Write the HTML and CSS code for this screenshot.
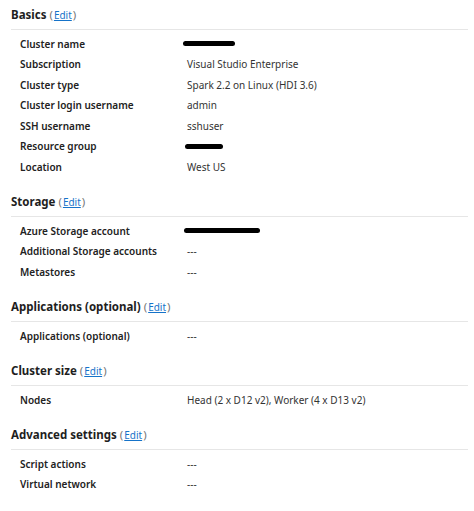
FILE: index.html
```html
<!DOCTYPE html>
<html>
<head>
<meta charset="utf-8">
<link rel="stylesheet" href="styles.css">
</head>
<body>
<div class="page">
  <section class="sec">
    <h2 class="sec-head">Basics <span class="paren">(</span><a class="edit" href="#">Edit</a><span class="paren">)</span></h2>
    <div class="rows">
      <div class="row"><span class="lbl">Cluster name</span><span class="val"><span class="redact r1"></span></span></div>
      <div class="row"><span class="lbl">Subscription</span><span class="val">Visual Studio Enterprise</span></div>
      <div class="row"><span class="lbl">Cluster type</span><span class="val">Spark 2.2 on Linux (HDI 3.6)</span></div>
      <div class="row"><span class="lbl">Cluster login username</span><span class="val">admin</span></div>
      <div class="row"><span class="lbl">SSH username</span><span class="val">sshuser</span></div>
      <div class="row"><span class="lbl">Resource group</span><span class="val"><span class="redact r2"></span></span></div>
      <div class="row"><span class="lbl">Location</span><span class="val">West US</span></div>
    </div>
  </section>
  <section class="sec">
    <h2 class="sec-head">Storage <span class="paren">(</span><a class="edit" href="#">Edit</a><span class="paren">)</span></h2>
    <div class="rows">
      <div class="row"><span class="lbl">Azure Storage account</span><span class="val"><span class="redact r3"></span></span></div>
      <div class="row"><span class="lbl">Additional Storage accounts</span><span class="val">---</span></div>
      <div class="row"><span class="lbl">Metastores</span><span class="val">---</span></div>
    </div>
  </section>
  <section class="sec">
    <h2 class="sec-head">Applications (optional) <span class="paren">(</span><a class="edit" href="#">Edit</a><span class="paren">)</span></h2>
    <div class="rows">
      <div class="row"><span class="lbl">Applications (optional)</span><span class="val">---</span></div>
    </div>
  </section>
  <section class="sec">
    <h2 class="sec-head">Cluster size <span class="paren">(</span><a class="edit" href="#">Edit</a><span class="paren">)</span></h2>
    <div class="rows">
      <div class="row"><span class="lbl">Nodes</span><span class="val">Head (2 x D12 v2), Worker (4 x D13 v2)</span></div>
    </div>
  </section>
  <section class="sec">
    <h2 class="sec-head">Advanced settings <span class="paren">(</span><a class="edit" href="#">Edit</a><span class="paren">)</span></h2>
    <div class="rows">
      <div class="row"><span class="lbl">Script actions</span><span class="val">---</span></div>
      <div class="row"><span class="lbl">Virtual network</span><span class="val">---</span></div>
    </div>
  </section>
</div>
</body>
</html>
```
FILE: styles.css
```css
html, body {
  margin: 0;
  padding: 0;
  background: #fff;
}
body {
  font-family: "Noto Sans", "Open Sans", "Liberation Sans", sans-serif;
  color: #1e1e1e;
  font-size: 10px;
}
.page {
  width: 474px;
  padding: 0 6px 0 11px;
  box-sizing: border-box;
}
.sec {
  margin-bottom: 10px;
}
.sec-head {
  margin: 0;
  padding-top: 7.5px;
  height: 30px;
  box-sizing: border-box;
  line-height: 14px;
  font-size: 11.5px;
  font-weight: 700;
  color: #1e1e1e;
  border-bottom: 1px solid #e6e6e6;
}
.paren {
  font-weight: 400;
  color: #777;
}
.edit {
  font-weight: 400;
  font-size: 10px;
  color: #1673c9;
  text-decoration: underline;
  margin: 0 1px;
}
.rows {
  padding-top: 3.5px;
}
.row {
  display: flex;
  align-items: center;
  height: 20.5px;
  padding-left: 9px;
}
.lbl {
  width: 167px;
  flex: none;
  font-weight: 600;
  color: #222;
}
.val {
  color: #333;
  display: flex;
  align-items: center;
}
.redact {
  display: inline-block;
  height: 5px;
  background: #000;
  border-radius: 3px;
}
.r1 { width: 52px; margin-left: -4px; }
.r2 { width: 38px; margin-left: -2px; }
.r3 { width: 76px; margin-left: -3px; }
```
